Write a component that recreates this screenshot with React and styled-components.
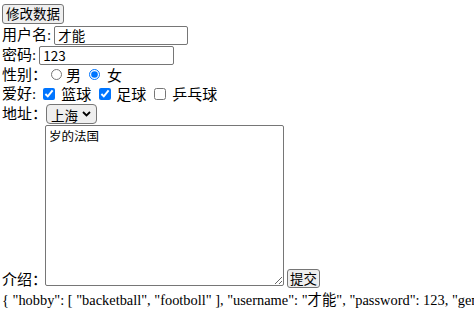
import React, { useState } from "react";
import styled, { createGlobalStyle } from "styled-components";

const GlobalStyle = createGlobalStyle`
  html, body {
    margin: 0;
    padding: 0;
    background: #fff;
    overflow: hidden;
  }
  body {
    font-family: "Liberation Serif", "Noto Sans CJK SC", serif;
    font-size: 15px;
    color: #000;
  }
`;

const Page = styled.div`
  display: flex;
  flex-direction: column;
  padding: 0 0 0 2px;
  width: 472px;
`;

const Row = styled.div`
  display: flex;
  align-items: ${(p) => p.$align || "center"};
  height: ${(p) => p.$h}px;
  white-space: nowrap;
`;

const Label = styled.span`
  font-family: "Liberation Serif", "Noto Sans CJK SC", serif;
  font-size: 15px;
  line-height: 20px;
  margin-right: ${(p) => p.$mr || 0}px;
`;

const GrayButton = styled.button`
  box-sizing: border-box;
  height: ${(p) => p.$h}px;
  padding: 0 ${(p) => p.$px}px;
  margin: ${(p) => p.$m || "0"};
  font-family: "Noto Sans CJK SC", sans-serif;
  font-size: 13.5px;
  line-height: 1;
  color: #000;
  background: #efefef;
  border: 1px solid #767676;
  border-radius: 3px;
`;

const TextInput = styled.input`
  box-sizing: border-box;
  width: ${(p) => p.$w}px;
  height: 19px;
  margin: 0 0 0 3px;
  padding: 0 3px;
  font-family: "Noto Sans CJK SC", "Liberation Sans", sans-serif;
  font-size: 13.5px;
  color: #000;
  background: #fff;
  border: 1px solid #767676;
  border-radius: 2px;
  outline: none;
`;

const Choice = styled.input`
  width: ${(p) => p.$size}px;
  height: ${(p) => p.$size}px;
  margin: ${(p) => p.$m};
  accent-color: #0075ff;
  flex: none;
`;

const ChoiceText = styled.span`
  font-family: "Noto Sans CJK SC", sans-serif;
  font-size: 15px;
  line-height: 20px;
`;

const SelectWrap = styled.span`
  position: relative;
  display: inline-flex;
`;

const Select = styled.select`
  box-sizing: border-box;
  appearance: none;
  width: 51px;
  height: 20px;
  padding: 0 0 0 4px;
  font-family: "Noto Sans CJK SC", sans-serif;
  font-size: 13.5px;
  color: #000;
  background: #efefef;
  border: 1px solid #767676;
  border-radius: 4px;
  outline: none;
`;

const Chevron = styled.svg`
  position: absolute;
  right: 6px;
  top: 7px;
  pointer-events: none;
`;

const TextArea = styled.textarea`
  box-sizing: border-box;
  width: 239px;
  height: 161px;
  margin: 0 0 4px 0;
  padding: 2px 3px;
  font-family: "Noto Sans CJK SC", sans-serif;
  font-size: 12.5px;
  line-height: 1.3;
  color: #000;
  background: #fff;
  border: 1px solid #767676;
  border-radius: 2px;
  outline: none;
  resize: both;
`;

const Json = styled.div`
  height: 20px;
  line-height: 20px;
  font-family: "Liberation Serif", "Noto Sans CJK SC", serif;
  font-size: 14.4px;
  white-space: nowrap;
  overflow: hidden;
`;

export default function App() {
  const [form, setForm] = useState({
    hobby: ["backetball", "footboll"],
    username: "才能",
    password: 123,
    gender: "女",
    address: "上海",
    introduce: "岁的法国",
  });

  const toggleHobby = (h) =>
    setForm((f) => ({
      ...f,
      hobby: f.hobby.includes(h) ? f.hobby.filter((x) => x !== h) : [...f.hobby, h],
    }));

  const json = `{ "hobby": [ ${form.hobby.map((h) => `"${h}"`).join(", ")} ], "username": "${form.username}", "password": ${form.password}, "gender": "${form.gender}", "address": "${form.address}", "introduce": "${form.introduce}" }`;

  return (
    <>
      <GlobalStyle />
      <Page>
        <Row $h={25} $align="flex-start">
          <GrayButton $h={20} $px={3} $m="4px 0 0 0">修改数据</GrayButton>
        </Row>
        <Row $h={20}>
          <Label>用户名:</Label>
          <TextInput
            $w={134}
            value={form.username}
            onChange={(e) => setForm({ ...form, username: e.target.value })}
          />
        </Row>
        <Row $h={20}>
          <Label>密码:</Label>
          <TextInput
            $w={135}
            value={form.password}
            onChange={(e) => setForm({ ...form, password: e.target.value })}
          />
        </Row>
        <Row $h={19}>
          <Label>性别：</Label>
          <Choice
            type="radio"
            name="gender"
            $size={11}
            $m="0 4px 0 4px"
            checked={form.gender === "男"}
            onChange={() => setForm({ ...form, gender: "男" })}
          />
          <ChoiceText>男</ChoiceText>
          <Choice
            type="radio"
            name="gender"
            $size={11}
            $m="0 7px 0 8px"
            checked={form.gender === "女"}
            onChange={() => setForm({ ...form, gender: "女" })}
          />
          <ChoiceText>女</ChoiceText>
        </Row>
        <Row $h={19}>
          <Label>爱好:</Label>
          <Choice
            type="checkbox"
            $size={12}
            $m="0 6px 0 7px"
            checked={form.hobby.includes("backetball")}
            onChange={() => toggleHobby("backetball")}
          />
          <ChoiceText>篮球</ChoiceText>
          <Choice
            type="checkbox"
            $size={12}
            $m="0 5px 0 8px"
            checked={form.hobby.includes("footboll")}
            onChange={() => toggleHobby("footboll")}
          />
          <ChoiceText>足球</ChoiceText>
          <Choice
            type="checkbox"
            $size={12}
            $m="0 6px 0 8px"
            checked={form.hobby.includes("pingpong")}
            onChange={() => toggleHobby("pingpong")}
          />
          <ChoiceText>乒乓球</ChoiceText>
        </Row>
        <Row $h={22}>
          <Label $mr={-1}>地址：</Label>
          <SelectWrap>
            <Select
              value={form.address}
              onChange={(e) => setForm({ ...form, address: e.target.value })}
            >
              <option>上海</option>
              <option>北京</option>
              <option>广州</option>
            </Select>
            <Chevron width="9" height="6" viewBox="0 0 9 6">
              <path d="M1 1l3.5 3.5L8 1" fill="none" stroke="#000" strokeWidth="1.8" />
            </Chevron>
          </SelectWrap>
        </Row>
        <Row $h={165} $align="flex-end">
          <Label $mr={-2}>介绍：</Label>
          <TextArea
            value={form.introduce}
            onChange={(e) => setForm({ ...form, introduce: e.target.value })}
          />
          <GrayButton $h={19} $px={2} $m="0 0 2px 3px">提交</GrayButton>
        </Row>
        <Json>{json}</Json>
      </Page>
    </>
  );
}
